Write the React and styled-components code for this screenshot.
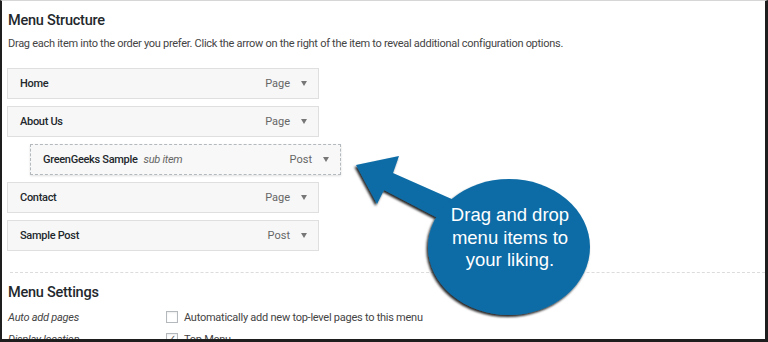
import React from "react";
import styled, { createGlobalStyle } from "styled-components";

const GlobalStyle = createGlobalStyle`
  html, body {
    margin: 0;
    padding: 0;
    background: #fff;
  }
  body {
    font-family: Roboto, "Liberation Sans", Arial, sans-serif;
    color: #23282d;
  }
`;

const Frame = styled.div`
  position: relative;
  box-sizing: border-box;
  width: 768px;
  height: 342px;
  overflow: hidden;
  background: #fff;
  border-top: 1px solid #d6d6d6;
  border-left: 2px solid #1e1e1e;
  border-right: 3px solid #1e1e1e;
  border-bottom: 3px solid #1e1e1e;
  padding: 10px 0 0 6px;
`;

const Heading = styled.h2`
  margin: 0;
  font-size: 14.5px;
  line-height: 20px;
  font-weight: 500;
  letter-spacing: -0.25px;
  color: #23282d;
`;

const Description = styled.p`
  margin: 5px 0 0;
  font-size: 11px;
  line-height: 16px;
  letter-spacing: -0.28px;
  color: #444;
`;

const MenuList = styled.ul`
  list-style: none;
  margin: 16px 0 0 -1px;
  padding: 0;
  display: flex;
  flex-direction: column;
  gap: 7px;
`;

const Item = styled.li`
  box-sizing: border-box;
  height: 31px;
  width: ${(p) => (p.$sub ? "311px" : "312px")};
  margin-left: ${(p) => (p.$sub ? "23px" : "0")};
  display: flex;
  align-items: center;
  padding: 0 11px 0 12px;
  background: ${(p) => (p.$sub ? "#f8f8f8" : "#f7f7f7")};
  border: 1px ${(p) => (p.$sub ? "dashed #b4b9be" : "solid #dfdfdf")};
  box-shadow: ${(p) => (p.$sub ? "0 1px 2px rgba(0,0,0,0.12)" : "none")};
`;

const Title = styled.span`
  font-size: 11px;
  font-weight: 500;
  letter-spacing: -0.3px;
  color: #23282d;
`;

const SubNote = styled.em`
  margin-left: 6px;
  font-size: 11px;
  letter-spacing: -0.3px;
  color: #666;
`;

const Type = styled.span`
  margin-left: auto;
  font-size: 11px;
  color: #666;
`;

const Toggle = styled.span`
  margin-left: 11px;
  width: 0;
  height: 0;
  border-left: 3px solid transparent;
  border-right: 3px solid transparent;
  border-top: 5px solid #777;
`;

const Divider = styled.hr`
  margin: 21px 0 0 2px;
  border: 0;
  border-top: 1px dashed #dcdcdc;
`;

const SettingsHeading = styled(Heading)`
  margin-top: 10px;
`;

const SettingsRow = styled.div`
  display: flex;
  align-items: center;
  height: 16px;
  margin-top: ${(p) => (p.$first ? "6px" : "6px")};
  font-size: 11px;
  letter-spacing: -0.25px;
  color: #444;
`;

const RowLabel = styled.span`
  width: 158px;
  font-style: italic;
  color: #444;
`;

const Box = styled.span`
  box-sizing: border-box;
  width: 12px;
  height: 12px;
  border: 1px solid #b4b9be;
  background: #fff;
  box-shadow: inset 0 1px 2px rgba(0, 0, 0, 0.07);
  display: flex;
  align-items: center;
  justify-content: center;
  font-size: 10px;
  line-height: 10px;
  color: #555;
`;

const BoxLabel = styled.span`
  margin-left: 6px;
  color: #444;
`;

const Callout = styled.div`
  position: absolute;
  left: 0;
  top: 0;
  width: 768px;
  height: 342px;
  pointer-events: none;
`;

const CalloutText = styled.div`
  position: absolute;
  left: 426px;
  top: 203px;
  width: 164px;
  text-align: center;
  font-family: "Liberation Sans", Arial, sans-serif;
  font-size: 18.5px;
  line-height: 22.5px;
  color: #fff;
`;

const items = [
  { title: "Home", type: "Page" },
  { title: "About Us", type: "Page" },
  { title: "GreenGeeks Sample", type: "Post", sub: true },
  { title: "Contact", type: "Page" },
  { title: "Sample Post", type: "Post" },
];

export default function App() {
  return (
    <>
      <GlobalStyle />
      <Frame>
        <Heading>Menu Structure</Heading>
        <Description>
          Drag each item into the order you prefer. Click the arrow on the right of the item to reveal additional configuration options.
        </Description>
        <MenuList>
          {items.map((it) => (
            <Item key={it.title} $sub={it.sub}>
              <Title>{it.title}</Title>
              {it.sub && <SubNote>sub item</SubNote>}
              <Type>{it.type}</Type>
              <Toggle />
            </Item>
          ))}
        </MenuList>
        <Divider />
        <SettingsHeading>Menu Settings</SettingsHeading>
        <SettingsRow $first>
          <RowLabel>Auto add pages</RowLabel>
          <Box />
          <BoxLabel>Automatically add new top-level pages to this menu</BoxLabel>
        </SettingsRow>
        <SettingsRow>
          <RowLabel>Display location</RowLabel>
          <Box>✓</Box>
          <BoxLabel>Top Menu</BoxLabel>
        </SettingsRow>

        {/* callout bubble pointing at the sub item */}
        <Callout>
          <svg width="768" height="342" viewBox="0 0 768 342">
            <defs>
              <filter id="shade" x="-20%" y="-20%" width="140%" height="140%">
                <feDropShadow dx="-1.5" dy="2" stdDeviation="1.2" floodColor="#000" floodOpacity="0.85" />
              </filter>
            </defs>
            <g fill="#0b6ca6" filter="url(#shade)" transform="translate(-1 -1)">
              <path d="M355 165 L398 156 L392 173 L462 204 L452 226 L383 190 L376 204 Z" />
              <ellipse cx="508" cy="247" rx="81" ry="68" />
            </g>
          </svg>
          <CalloutText>
            Drag and drop
            <br />
            menu items to
            <br />
            your liking.
          </CalloutText>
        </Callout>
      </Frame>
    </>
  );
}
